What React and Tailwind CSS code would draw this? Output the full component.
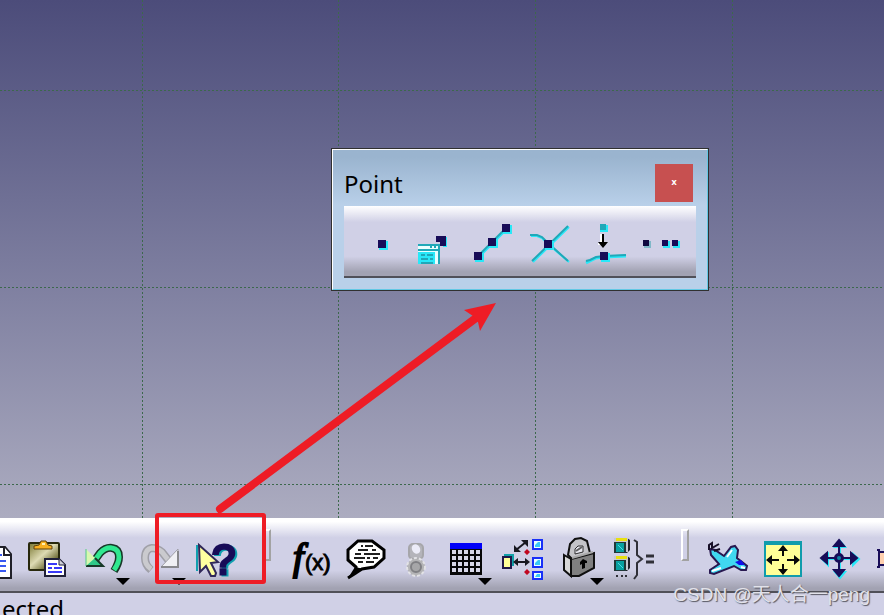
import React from "react";

const NAVY = "#180c58";
const CYAN = "#28e8f8";
const TEAL = "#20a8b8";

// Small pixel marker used by the point tools
function Dot({ x, y, size = 8 }) {
  return (
    <g>
      <rect x={x - size / 2 + 1} y={y - size / 2 + 1} width={size + 1} height={size + 1} fill={CYAN} />
      <rect x={x - size / 2} y={y - size / 2} width={size} height={size} fill={NAVY} />
    </g>
  );
}

// Every tool gets the same 56px drawing area
function Tool({ label, menu, className = "w-14", children }) {
  return (
    <button type="button" aria-label={label} title={label} className={`h-14 shrink-0 overflow-hidden ${className}`}>
      <svg viewBox="0 0 56 56" className="block h-14 w-14 max-w-none">
        {children}
        {menu && <path d="M41 47H55L48 54Z" fill="#000" />}
      </svg>
    </button>
  );
}

function Separator() {
  return (
    <div className="w-[38px] shrink-0 pl-5">
      <div className="-mt-0.5 h-8 w-2 border-2 border-t-white border-r-[#a2a2a2] border-b-[#a2a2a2] border-l-white" />
    </div>
  );
}

function PointWindow() {
  return (
    <section className="absolute top-[148px] left-[331px] border border-[#303030]">
      <div className="border border-t-white border-r-[#62c8e4] border-b-[#62c8e4] border-l-white bg-[#b9d0e8] bg-linear-to-b from-[#9ab4cf] from-5% to-[#b9d0e9] to-40% px-[11px] pb-[11px]">
        <header className="flex h-14 items-end justify-between">
          <h1 className="pb-1.5 text-2xl leading-8">Point</h1>
          <button
            type="button"
            aria-label="Close"
            className="mr-[3px] mb-1 flex size-[38px] items-center justify-center bg-[#c75050] pb-0.5 text-[9px] leading-3 font-bold text-white"
          >
            x
          </button>
        </header>
        <div className="flex h-[72px] w-[352px] border-b-2 border-[#505058] pt-[9px] pl-2.5 [background-image:linear-gradient(#fff,#d0d0e6_23%,#d0d0e6_72%,#a2a2b2_94%)]">
          <Tool label="Point">
            <Dot x={28} y={29} />
          </Tool>
          <Tool label="Point by coordinates">
            <path d="M27 22H37V32H33V27H27Z" fill={CYAN} />
            <path d="M26 21H36V31H30V27H26Z" fill={NAVY} />
            <rect x="8" y="29" width="22" height="20" fill="#e8ffff" />
            <rect x="8" y="29" width="22" height="2" fill={TEAL} />
            <path d="M8 35H30M20 32H22M24 32H26M29 30V49" stroke={TEAL} strokeWidth="2" />
            <rect x="8" y="37" width="17" height="12" fill={CYAN} />
            <path d="M11 40H15M17 40H23M11 44H18M20 44H23M11 48H23" stroke={TEAL} strokeWidth="2" />
          </Tool>
          <Tool label="Points on a line">
            <path d="M13 42L41 14" stroke={CYAN} strokeWidth="2" />
            <path d="M12 41L40 13" stroke={TEAL} strokeWidth="2" />
            <Dot x={12} y={41} />
            <Dot x={26} y={27} />
            <Dot x={40} y={13} />
          </Tool>
          <Tool label="Intersection point">
            <g fill="none" strokeWidth="2">
              <path d="M9 21H15L20 23L26 29L47 47M11 47L47 12" stroke={CYAN} />
              <path d="M8 20H15L20 22L26 28L46 46M10 46L46 11" stroke={TEAL} />
            </g>
            <Dot x={26} y={29} />
          </Tool>
          <Tool label="Projection point">
            <rect x="22" y="10" width="8" height="7" fill={CYAN} />
            <rect x="22" y="9" width="6" height="6" fill={TEAL} />
            <path d="M23 19V29H20" stroke="#fff" strokeWidth="2" fill="none" />
            <path d="M24 19H26V27H30L25 33L20 27H24Z" fill="#000" />
            <path d="M8 48L12 46L18 43L26 42L48 41" stroke={CYAN} strokeWidth="3" fill="none" />
            <path d="M8 46L12 45L18 42L26 41L48 40" stroke={TEAL} strokeWidth="2" fill="none" />
            <Dot x={26} y={41} />
          </Tool>
          <Tool label="Aligned points">
            <rect x="10" y="26" width="7" height="7" fill="#80b8c8" />
            <rect x="9" y="25" width="6" height="6" fill="#100840" />
            <Dot x={31} y={28} size={6} />
            <Dot x={41} y={28} size={6} />
          </Tool>
        </div>
      </div>
    </section>
  );
}

function Workspace() {
  return (
    <main className="relative min-h-[518px] flex-1 bg-linear-to-b from-[#4c4c7a] to-[#acacc0]">
      <svg className="absolute inset-0 h-full w-full" stroke="#3c684c" strokeDasharray="2 2" shapeRendering="crispEdges">
        {[142, 338, 535, 732].map((x) => (
          <line key={x} x1={x + 0.5} x2={x + 0.5} y1="0" y2="100%" />
        ))}
        {[90, 287, 484].map((y) => (
          <line key={y} x1="0" x2="100%" y1={y + 0.5} y2={y + 0.5} />
        ))}
      </svg>
      <PointWindow />
    </main>
  );
}

function Toolbar() {
  return (
    <nav className="flex h-[75px] shrink-0 overflow-hidden border-b-2 border-[#505058] pt-[13px] [background-image:linear-gradient(#fff_5%,#d0d0e6_27%,#d0d0e6_72%,#a2a2b2_96%)]">
      <Tool label="Copy" className="w-[19px]">
        <path d="M-12 16H5L11 23V47H-12Z" fill="#fff" stroke="#202028" strokeWidth="2" />
        <path d="M4 16V24H11" fill="#fff" stroke="#202028" strokeWidth="2" />
        <path d="M0 24H2M0 30H6M0 35H6M0 40H6" stroke="#3858f0" strokeWidth="2" />
      </Tool>
      <Tool label="Paste">
        <defs>
          <linearGradient id="board" x1="0" y1="0" x2="1" y2="1">
            <stop offset="0" stopColor="#77752f" />
            <stop offset=".45" stopColor="#dedbb4" />
            <stop offset=".8" stopColor="#5d5b22" />
          </linearGradient>
        </defs>
        <rect x="10" y="12" width="30" height="27" rx="1" fill="url(#board)" stroke="#28280c" strokeWidth="2" />
        <path d="M15 18V15L20 14L22 10H27L29 14L33 15V18Z" fill="#f8b020" stroke="#604008" />
        <rect x="23" y="12" width="3" height="2" fill="#fff0b0" />
        <path d="M26 28H40L46 34V45H26Z" fill="#fff" stroke="#202038" strokeWidth="2" />
        <path d="M40 28V34H46" fill="#d0d0d8" stroke="#202038" />
        <path d="M29 33H38M29 37H33M35 37H43M29 41H43" stroke="#3838f8" strokeWidth="2" />
      </Tool>
      <Tool label="Undo" menu>
        <path d="M20 29L25 22Q31 16 37 17Q44 18 44 26Q44 32 39 40" fill="none" stroke="#183828" strokeWidth="8" />
        <path d="M20 29L25 22Q31 16 37 17Q44 18 44 26Q44 32 39 39" fill="none" stroke="#30e890" strokeWidth="5" />
        <path d="M11 18L28 35H11Z" fill="#d8f8b0" />
        <path d="M11 35H28L20 27" fill="#30c888" stroke="#183828" strokeWidth="2" />
        <path d="M11 18V35" stroke="#50c888" />
      </Tool>
      <Tool label="Redo" menu>
        <path d="M38 30L31 21Q26 17 21 17Q14 18 14 27Q14 34 20 39" fill="none" stroke="#a0a0a8" strokeWidth="8" />
        <path d="M38 30L31 21Q26 17 21 17Q14 18 14 27Q14 34 20 38" fill="none" stroke="#cacace" strokeWidth="5" />
        <path d="M47 18V36H30Z" fill="#f0f0f4" stroke="#a0a0a8" />
        <path d="M30 36H47V20" fill="none" stroke="#88888c" strokeWidth="2" />
      </Tool>
      <Tool label="What's this?">
        <text
          x="25"
          y="43"
          fontSize="42"
          fill={NAVY}
          stroke={NAVY}
          strokeWidth="3"
          className="font-['Liberation_Sans',sans-serif] drop-shadow-[2px_1px_0_#10a0b0]"
        >
          ?
        </text>
        <path d="M10 14V40" stroke="#10a0b0" strokeWidth="2" />
        <path d="M12 14L31 31L24 32L29 42L28 45L24 45L19 35L13 41Z" fill="#ffffa0" stroke="#302858" strokeWidth="2" />
      </Tool>
      <Separator />
      <Tool label="Formula">
        <text x="12" y="39" fontSize="38" stroke="#000" strokeWidth="2" className="font-['Liberation_Serif',serif] italic">
          f
        </text>
        <text x="24" y="39" fontSize="22" stroke="#000" className="font-['Liberation_Sans',sans-serif]">
          (x)
        </text>
      </Tool>
      <Tool label="Comment">
        <path d="M21 10H35L47 19V27L37 36L25 38L11 47L19 42V36L11 29V19Z" fill="#fff" stroke="#000" strokeWidth="3" />
        <path d="M11 47L18 36L27 38Z" fill="#000" />
        <path d="M24 15H26M28 15H36M21 19H31M35 19H39M18 23H24M27 23H43M17 27H28M30 27H33M36 27H41M21 31H26M29 31H37" stroke="#202020" strokeWidth="2" />
      </Tool>
      <Tool label="Link" className="w-11">
        <rect x="16" y="13" width="14" height="15" rx="4" fill="#b4b4ba" stroke="#a6a6aa" strokeWidth="2" />
        <ellipse cx="23" cy="18" rx="4" ry="5" fill="#ececf8" transform="rotate(-30 23 18)" />
        <circle cx="23" cy="36" r="9" fill="#b4b4b6" stroke="#e2e2e6" strokeWidth="2" strokeDasharray="3 2" />
        <circle cx="23" cy="36" r="5" fill="#a6a6a8" stroke="#808084" strokeWidth="2" />
      </Tool>
      <Tool label="Design table" menu>
        <rect x="13" y="12" width="32" height="32" fill="#080808" />
        <rect x="13" y="12" width="32" height="6" fill="#0000f8" />
        {[19, 25, 31, 37].map((y) =>
          [15, 21, 27, 33, 39].map((x) => <rect key={`${x}-${y}`} x={x} y={y} width="4" height="4" fill="#d8d8e8" />)
        )}
      </Tool>
      <Tool label="Relations">
        <path d="M11 23H21V35H18V26H11Z" fill="#10a0a8" />
        <rect x="10" y="26" width="8" height="11" fill="#ffff98" stroke="#201848" strokeWidth="2" />
        <path d="M23 19L33 11M23 31H35" stroke="#181820" strokeWidth="2" />
        <path d="M21 21V14L28 21ZM35 9H28L35 16ZM20 31L25 27V35ZM37 31L32 27V35Z" fill="#181820" />
        <path d="M34 18L37 21L34 24L31 21ZM34 38L37 41L34 44L31 41Z" fill="#c00820" />
        <g fill="#e8ffff" stroke="#1830f8" strokeWidth="2">
          <rect x="40" y="9" width="9" height="9" />
          <rect x="40" y="27" width="9" height="9" />
          <rect x="40" y="41" width="9" height="7" />
        </g>
        <path d="M45 11H47V16H42V14ZM45 29H47V34H42V32ZM44 43H47V46H42Z" fill="#38c8f8" />
      </Tool>
      <Tool label="Lock" menu>
        <path d="M19 24L21 13L26 8L32 7L38 10L41 22L34 27H22Z" fill="#c4c4c8" stroke="#101010" strokeWidth="2" />
        <path d="M26 23V18L29 15H34V21Z" fill="#e8e8f0" stroke="#303030" />
        <path d="M27 20L33 16" stroke="#606060" strokeWidth="2" />
        <path d="M15 24L22 28V45L15 39Z" fill="#d8d8d8" stroke="#101010" strokeWidth="2" />
        <path d="M22 28L45 22V37L30 45H22Z" fill="#808080" stroke="#101010" strokeWidth="2" />
        <path d="M23 27L44 21" fill="none" stroke="#a8a8a8" strokeWidth="2" />
        <path d="M34 28L38 30V32H36V37L33 38V33L31 34V31Z" fill="#000" />
      </Tool>
      <Tool label="Equivalent dimensions">
        {[7, 25].map((y) => (
          <g key={y}>
            <path d={`M10 ${y}H22L25 ${y + 2}V${y + 12}L22 ${y + 15}H10Z`} fill="#202028" />
            <rect x="9" y={y} width="14" height="14" fill="#c8c8d0" />
            <rect x="11" y={y} width="11" height="3" fill="#e8e010" />
            <rect x="9" y={y + 4} width="12" height="11" fill="#203838" />
            <rect x="11" y={y + 5} width="8" height="9" fill="#08a0a0" />
            <path d={`M13 ${y + 7}L18 ${y + 12}`} stroke="#48e0e8" fill="none" />
          </g>
        ))}
        <path d="M11 45H13M16 45H18M20 45H22" stroke="#303038" strokeWidth="2" />
        <path d="M29 9L32 11V24L37 28L32 32V44L29 48" fill="none" stroke="#303038" strokeWidth="2" />
        <path d="M41 25H49M41 31H49" stroke="#303038" strokeWidth="3" />
      </Tool>
      <Separator />
      <Tool label="Fly mode">
        <path d="M11 18L16 19L25 25L32 16L36 15L39 19L38 27L48 35L47 39L42 39L35 35L15 43L11 42V39L20 33L12 24Z" fill="#40d8f0" stroke="#281850" strokeWidth="2" />
        <path d="M10 19V14L13 12V17L20 13M15 20L21 18" fill="none" stroke="#181028" strokeWidth="2" />
        <path d="M13 40L22 37M33 19L28 26" stroke="#fff" strokeWidth="2" />
        <path d="M36 31L42 29L46 34L40 34Z" fill="#1010e8" />
        <path d="M42 36L46 37" stroke="#fff" strokeWidth="2" />
      </Tool>
      <Tool label="Fit all in">
        <rect x="10" y="11" width="36" height="34" fill="#ffff98" stroke="#109cac" strokeWidth="2" />
        <rect x="9" y="10" width="38" height="4" fill="#109cac" />
        <path d="M28 17V25M28 33V41M14 29H24M32 29H42" stroke="#080808" strokeWidth="2" />
        <path d="M28 14L33 20H23ZM28 44L33 38H23ZM11 29L17 24V34ZM45 29L39 24V34Z" fill="#080808" />
      </Tool>
      <Tool label="Pan">
        <g stroke={CYAN} fill={CYAN} strokeWidth="2">
          <path d="M29 12V45M13 28H45" />
          <path d="M29 10L34 16H24ZM29 47L34 41H24ZM11 28L17 23V34ZM48 28L42 23V34Z" />
        </g>
        <g stroke={NAVY} fill={NAVY} strokeWidth="2">
          <path d="M28 11V44M13 27H44" />
          <path d="M28 9L33 15H23ZM28 45L33 39H23ZM10 27L16 22V32ZM46 27L40 22V32Z" />
          <circle cx="28" cy="27" r="4" />
        </g>
        <circle cx="28" cy="27" r="2" fill="#1080a0" />
      </Tool>
      <Tool label="Rotate">
        <path d="M13 21H30V35H13Z" fill="#ffd0b0" />
        <path d="M10 19H12V36H10M13 21H30M13 34H30" fill="none" stroke={NAVY} strokeWidth="2" />
      </Tool>
    </nav>
  );
}

export default function App() {
  return (
    <div className="relative flex min-h-screen flex-col overflow-hidden bg-[#d0d0e6] font-['Noto_Sans',sans-serif] text-black">
      <Workspace />
      <Toolbar />
      <footer className="h-[22px] shrink-0 overflow-hidden pl-0.5">
        <p className="text-2xl leading-8">ected</p>
      </footer>

      {/* Red callout from the toolbar to the floating window */}
      <svg className="pointer-events-none absolute inset-0 h-full w-full" fill="none">
        <rect x="157" y="515" width="107" height="67" rx="1" stroke="#ee1c25" strokeWidth="4" />
        <path d="M220 509L476 318" stroke="#ee1c25" strokeWidth="8" strokeLinecap="round" />
        <path d="M496 303L464 310L473 316L478 322L480 331Z" fill="#ee1c25" />
      </svg>

      <p className="absolute right-[14px] bottom-1.5 font-['Liberation_Sans','Noto_Sans_CJK_SC',sans-serif] text-[19px] leading-7 whitespace-nowrap text-[#e2e2ea] [text-shadow:1px_1px_1px_#55555f]">
        CSDN @天人合一peng
      </p>
    </div>
  );
}
